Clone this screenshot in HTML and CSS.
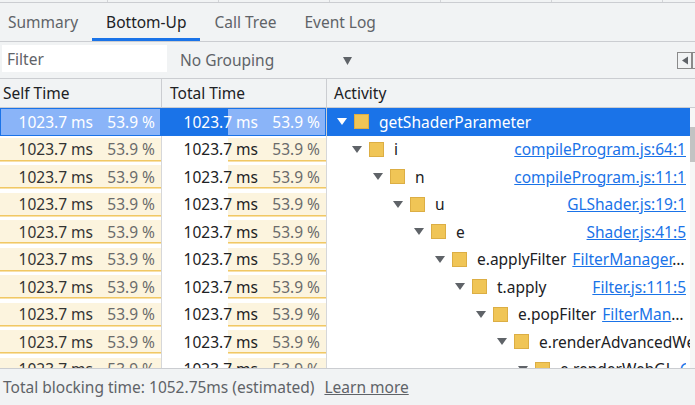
FILE: index.html
```html
<!DOCTYPE html>
<html>
<head>
<meta charset="utf-8">
<link rel="stylesheet" href="styles.css">
</head>
<body>
<div class="panel">
  <div class="ruler"><span></span><span></span><span></span><span></span><span></span><span></span><span></span></div>
  <div class="tabs">
    <div class="tab first">Summary</div>
    <div class="tab active">Bottom-Up</div>
    <div class="tab">Call Tree</div>
    <div class="tab">Event Log</div>
  </div>
  <div class="toolbar">
    <div class="filter">Filter</div>
    <div class="grouping">No Grouping</div>
    <svg class="dd" width="9" height="8" viewBox="0 0 9 8"><path d="M0 0H9L4.5 8Z" fill="#5f6368"/></svg>
    <svg class="sidebtn" width="20" height="17" viewBox="0 0 20 17"><rect x="0.5" y="0.5" width="14" height="16" fill="#f1f3f4" stroke="#8a8a8a"/><path d="M5 8.5L11 4.5V12.5Z" fill="#5f6368"/><rect x="15.5" y="0.5" width="8" height="16" fill="#f1f3f4" stroke="#8a8a8a"/></svg>
  </div>
  <div class="header">
    <div class="hcell self">Self Time</div>
    <div class="hcell total">Total Time</div>
    <div class="hcell act">Activity</div>
  </div>
  <div class="rows">
    <div class="row selected">
      <div class="cell self"><span class="ms">1023.7 ms</span><span class="pct">53.9 %</span></div>
      <div class="cell total"><span class="ms">1023.7 ms</span><span class="pct">53.9 %</span></div>
      <div class="cell act l0"><span class="tri"></span><span class="sq"></span><span class="name">getShaderParameter</span></div>
    </div>
    <div class="row">
      <div class="cell self"><span class="ms">1023.7 ms</span><span class="pct">53.9 %</span></div>
      <div class="cell total"><span class="ms">1023.7 ms</span><span class="pct">53.9 %</span></div>
      <div class="cell act l1"><span class="tri"></span><span class="sq"></span><span class="name">i</span><span class="src"><span class="link">compileProgram.js:64:1</span></span></div>
    </div>
    <div class="row">
      <div class="cell self"><span class="ms">1023.7 ms</span><span class="pct">53.9 %</span></div>
      <div class="cell total"><span class="ms">1023.7 ms</span><span class="pct">53.9 %</span></div>
      <div class="cell act l2"><span class="tri"></span><span class="sq"></span><span class="name">n</span><span class="src"><span class="link">compileProgram.js:11:1</span></span></div>
    </div>
    <div class="row">
      <div class="cell self"><span class="ms">1023.7 ms</span><span class="pct">53.9 %</span></div>
      <div class="cell total"><span class="ms">1023.7 ms</span><span class="pct">53.9 %</span></div>
      <div class="cell act l3"><span class="tri"></span><span class="sq"></span><span class="name">u</span><span class="src"><span class="link">GLShader.js:19:1</span></span></div>
    </div>
    <div class="row">
      <div class="cell self"><span class="ms">1023.7 ms</span><span class="pct">53.9 %</span></div>
      <div class="cell total"><span class="ms">1023.7 ms</span><span class="pct">53.9 %</span></div>
      <div class="cell act l4"><span class="tri"></span><span class="sq"></span><span class="name">e</span><span class="src"><span class="link">Shader.js:41:5</span></span></div>
    </div>
    <div class="row">
      <div class="cell self"><span class="ms">1023.7 ms</span><span class="pct">53.9 %</span></div>
      <div class="cell total"><span class="ms">1023.7 ms</span><span class="pct">53.9 %</span></div>
      <div class="cell act l5"><span class="tri"></span><span class="sq"></span><span class="name">e.applyFilter</span><span class="src"><span class="link">FilterManager.js:196:5</span></span></div>
    </div>
    <div class="row">
      <div class="cell self"><span class="ms">1023.7 ms</span><span class="pct">53.9 %</span></div>
      <div class="cell total"><span class="ms">1023.7 ms</span><span class="pct">53.9 %</span></div>
      <div class="cell act l6"><span class="tri"></span><span class="sq"></span><span class="name">t.apply</span><span class="src"><span class="link">Filter.js:111:5</span></span></div>
    </div>
    <div class="row">
      <div class="cell self"><span class="ms">1023.7 ms</span><span class="pct">53.9 %</span></div>
      <div class="cell total"><span class="ms">1023.7 ms</span><span class="pct">53.9 %</span></div>
      <div class="cell act l7"><span class="tri"></span><span class="sq"></span><span class="name">e.popFilter</span><span class="src"><span class="link">FilterManager.js:292:5</span></span></div>
    </div>
    <div class="row">
      <div class="cell self"><span class="ms">1023.7 ms</span><span class="pct">53.9 %</span></div>
      <div class="cell total"><span class="ms">1023.7 ms</span><span class="pct">53.9 %</span></div>
      <div class="cell act l8"><span class="tri"></span><span class="sq"></span><span class="name">e.renderAdvancedWebGL</span><span class="src"><span class="link">Container.js:486:5</span></span></div>
    </div>
    <div class="row">
      <div class="cell self"><span class="ms">1023.7 ms</span><span class="pct">53.9 %</span></div>
      <div class="cell total"><span class="ms">1023.7 ms</span><span class="pct">53.9 %</span></div>
      <div class="cell act l9"><span class="tri"></span><span class="sq"></span><span class="name">e.renderWebGL</span><span class="src"><span class="link">GLRenderer.js:420:5</span></span></div>
    </div>
    <div class="scrollbar"><div class="thumb"></div></div>
  </div>
  <div class="footer">Total blocking time: 1052.75ms (estimated)<span class="learn">Learn more</span></div>
</div>
</body>
</html>
```
FILE: styles.css
```css
html, body {
  margin: 0;
  padding: 0;
  background: #ffffff;
}
body {
  font-family: "Noto Sans", "Open Sans", sans-serif;
  font-size: 15.5px;
  color: #202124;
}
.panel {
  width: 695px;
  height: 405px;
  overflow: hidden;
  display: flex;
  flex-direction: column;
  background: #f1f3f4;
}
.ruler {
  height: 2px;
  flex: 0 0 auto;
  display: flex;
  border-bottom: 1px solid #cbcdd1;
  background: #f1f3f4;
}
.ruler span {
  flex: 0 0 111px;
  border-right: 1px solid #d3d5d8;
  box-sizing: border-box;
}
.ruler span:first-child {
  flex-basis: 108px;
}
.tabs {
  height: 38px;
  flex: 0 0 auto;
  display: flex;
  border-bottom: 1px solid #cbcdd1;
}
.tab {
  padding: 0 14px;
  display: flex;
  align-items: center;
  color: #5f6368;
  box-sizing: border-box;
  border-bottom: 3px solid transparent;
  padding-top: 3px;
}
.tab.first {
  padding-left: 8px;
}
.tab.active {
  color: #202124;
  border-bottom-color: #1a73e8;
}
.toolbar {
  height: 36px;
  flex: 0 0 auto;
  display: flex;
  align-items: center;
  border-bottom: 1px solid #cbcdd1;
}
.filter {
  margin-left: 2px;
  width: 165px;
  height: 27px;
  box-sizing: border-box;
  background: #ffffff;
  color: #5f6368;
  padding-left: 5px;
  display: flex;
  align-items: center;
  align-self: flex-start;
  margin-top: 3px;
}
.grouping {
  margin-left: 13px;
  color: #5f6368;
  width: 163px;
}
.dd {
  margin-top: 1px;
  flex: 0 0 auto;
}
.sidebtn {
  margin-left: auto;
  margin-right: -2px;
  flex: 0 0 auto;
}
.header {
  height: 28px;
  flex: 0 0 auto;
  display: grid;
  grid-template-columns: 162px 165px 1fr;
  border-bottom: 1px solid #cbcdd1;
}
.hcell {
  display: flex;
  align-items: center;
  border-right: 1px solid #cbcdd1;
  color: #202124;
}
.hcell.self { padding-left: 3px; }
.hcell.total { padding-left: 8px; }
.hcell.act { padding-left: 7px; border-right: 0; }
.rows {
  position: relative;
  height: 260px;
  flex: 0 0 auto;
  overflow: hidden;
  background: #ffffff;
}
.row {
  height: 27.5px;
  display: grid;
  grid-template-columns: 162px 165px 1fr;
}
.cell {
  border-right: 1px solid #d6d7d9;
  display: flex;
  align-items: center;
  box-sizing: border-box;
  min-width: 0;
}
.cell.self, .cell.total {
  justify-content: flex-end;
  padding-right: 6px;
  background-repeat: no-repeat;
  background-image: linear-gradient(#f1c864, #f1c864), linear-gradient(#fcf4de, #fcf4de);
  background-position: right 0 bottom 2px, right 0 top 2px;
}
.cell.self {
  background-size: 100% 1.5px, 100% 23.5px;
}
.cell.total {
  background-size: 98px 1.5px, 98px 23.5px;
}
.ms {
  color: #333333;
}
.pct {
  width: 62px;
  text-align: right;
  color: #6b6b6b;
}
.cell.total .ms {
  color: #202124;
}
.cell.act {
  border-right: 0;
  overflow: hidden;
  padding-right: 9px;
  white-space: nowrap;
}
.l0 { padding-left: 10px; }
.l1 { padding-left: 25px; }
.l2 { padding-left: 46px; }
.l3 { padding-left: 66px; }
.l4 { padding-left: 87px; }
.l5 { padding-left: 108px; }
.l6 { padding-left: 128px; }
.l7 { padding-left: 149px; }
.l8 { padding-left: 170px; }
.l9 { padding-left: 191px; }
.tri {
  flex: 0 0 auto;
  width: 0;
  height: 0;
  border-left: 5px solid transparent;
  border-right: 5px solid transparent;
  border-top: 7px solid #5f6368;
  margin-right: 7px;
}
.sq {
  flex: 0 0 auto;
  width: 15px;
  height: 15px;
  box-sizing: border-box;
  background: #f0c556;
  border: 1px solid #dcae44;
  margin-right: 10px;
}
.name {
  flex: 0 0 auto;
  color: #202124;
}
.src {
  margin-left: auto;
  padding-left: 6px;
  flex: 0 1 auto;
  min-width: 0;
  overflow: hidden;
  text-overflow: ellipsis;
  color: #202124;
}
.link {
  color: #1a73e8;
  text-decoration: underline;
}
.row.selected {
  background: #1a73e8;
}
.row.selected .cell.self,
.row.selected .cell.total {
  background-image: linear-gradient(#8ab4f8, #8ab4f8);
  background-position: right 1px top 1px;
}
.row.selected .cell.self {
  background-size: calc(100% - 2px) calc(100% - 2px);
  border-right-color: #1a73e8;
}
.row.selected .cell.total {
  background-size: 97px calc(100% - 2px);
  border-right-color: #cbcdd1;
}
.row.selected .ms,
.row.selected .pct,
.row.selected .name {
  color: #ffffff;
}
.row.selected .tri {
  border-top-color: #ffffff;
}
.scrollbar {
  position: absolute;
  top: 0;
  left: 690px;
  width: 5px;
  height: 100%;
  background: #f6f6f6;
}
.thumb {
  margin-top: 19px;
  height: 35px;
  background: #c3c3c3;
}
.footer {
  flex: 1 1 auto;
  border-top: 1px solid #cbcdd1;
  display: flex;
  align-items: center;
  padding-left: 3px;
  padding-bottom: 1px;
  color: #5f6368;
  white-space: nowrap;
}
.learn {
  margin-left: 10px;
  text-decoration: underline;
}
```
